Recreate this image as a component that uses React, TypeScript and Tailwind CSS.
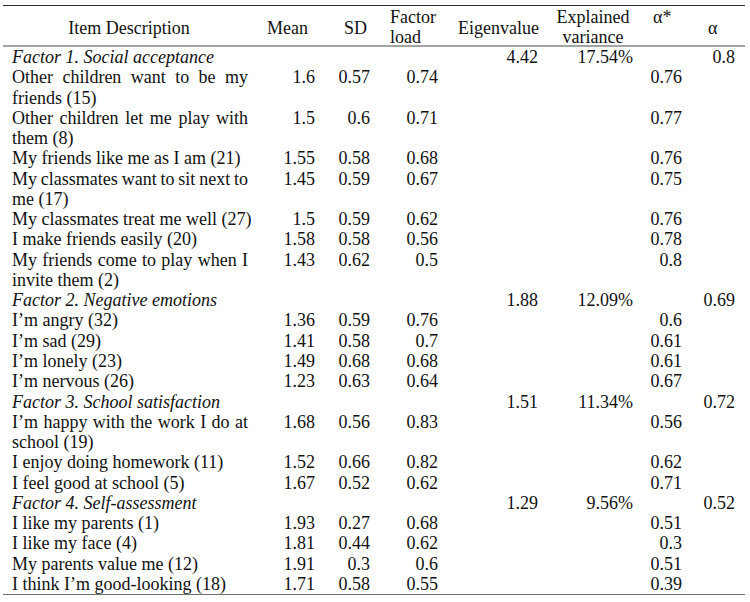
import React from "react";

type Row = {
  t: string[];
  f?: boolean;
  tight?: boolean;
  m?: string;
  sd?: string;
  fl?: string;
  ev?: string;
  vr?: string;
  as?: string;
  a?: string;
};

const rows: Row[] = [
  { t: ["Factor 1. Social acceptance"], f: true, ev: "4.42", vr: "17.54%", a: "0.8" },
  { t: ["Other children want to be my", "friends (15)"], m: "1.6", sd: "0.57", fl: "0.74", as: "0.76" },
  { t: ["Other children let me play with", "them (8)"], m: "1.5", sd: "0.6", fl: "0.71", as: "0.77" },
  { t: ["My friends like me as I am (21)"], m: "1.55", sd: "0.58", fl: "0.68", as: "0.76" },
  { t: ["My classmates want to sit next to", "me (17)"], tight: true, m: "1.45", sd: "0.59", fl: "0.67", as: "0.75" },
  { t: ["My classmates treat me well (27)"], m: "1.5", sd: "0.59", fl: "0.62", as: "0.76" },
  { t: ["I make friends easily (20)"], m: "1.58", sd: "0.58", fl: "0.56", as: "0.78" },
  { t: ["My friends come to play when I", "invite them (2)"], m: "1.43", sd: "0.62", fl: "0.5", as: "0.8" },
  { t: ["Factor 2. Negative emotions"], f: true, ev: "1.88", vr: "12.09%", a: "0.69" },
  { t: ["I\u2019m angry (32)"], m: "1.36", sd: "0.59", fl: "0.76", as: "0.6" },
  { t: ["I\u2019m sad (29)"], m: "1.41", sd: "0.58", fl: "0.7", as: "0.61" },
  { t: ["I\u2019m lonely (23)"], m: "1.49", sd: "0.68", fl: "0.68", as: "0.61" },
  { t: ["I\u2019m nervous (26)"], m: "1.23", sd: "0.63", fl: "0.64", as: "0.67" },
  { t: ["Factor 3. School satisfaction"], f: true, ev: "1.51", vr: "11.34%", a: "0.72" },
  { t: ["I\u2019m happy with the work I do at", "school (19)"], m: "1.68", sd: "0.56", fl: "0.83", as: "0.56" },
  { t: ["I enjoy doing homework (11)"], m: "1.52", sd: "0.66", fl: "0.82", as: "0.62" },
  { t: ["I feel good at school (5)"], m: "1.67", sd: "0.52", fl: "0.62", as: "0.71" },
  { t: ["Factor 4. Self-assessment"], f: true, ev: "1.29", vr: "9.56%", a: "0.52" },
  { t: ["I like my parents (1)"], m: "1.93", sd: "0.27", fl: "0.68", as: "0.51" },
  { t: ["I like my face (4)"], m: "1.81", sd: "0.44", fl: "0.62", as: "0.3" },
  { t: ["My parents value me (12)"], m: "1.91", sd: "0.3", fl: "0.6", as: "0.51" },
  { t: ["I think I\u2019m good-looking (18)"], m: "1.71", sd: "0.58", fl: "0.55", as: "0.39" },
];

const grid =
  "grid grid-cols-[252px_65px_55px_68px_100px_95px_49px_58px]";

export default function App() {
  return (
    <div
      className="w-[750px] h-[602px] bg-white text-[#111] text-[18px] pt-[5px] pl-[3px]"
      style={{ fontFamily: '"Liberation Serif", "Times New Roman", serif' }}
    >
      <div className="w-[742px]">
        {/* header */}
        <div
          className={`${grid} h-[42px] border-t border-t-[#2a2a2a] border-b-2 border-b-[#a3a3a3] leading-[19.5px]`}
        >
          <div className="flex items-center justify-center pt-[4px]">Item Description</div>
          <div className="flex items-center justify-center pt-[4px]">Mean</div>
          <div className="flex items-center justify-end pr-[8px] pt-[4px]">SD</div>
          <div className="pl-[15px] pt-[2px]">
            <div>Factor</div>
            <div>load</div>
          </div>
          <div className="flex items-center pl-[15px] pt-[4px]">Eigenvalue</div>
          <div className="pt-[2px] pl-[5px] text-center">
            <div>Explained</div>
            <div>variance</div>
          </div>
          <div className="pl-[15px] pt-[2px]">α*</div>
          <div className="flex items-center pl-[21px] pt-[4px]">α</div>
        </div>
        {/* body */}
        <div className="border-b border-b-[#6e6e6e] leading-[20.26px]">
          {rows.map((r, i) => (
            <div key={i} className={grid}>
              <div className={`pl-[9px] pr-[7px] ${r.f ? "italic" : ""}`}>
                {r.t.length > 1 ? (
                  <>
                    <div
                      className={`whitespace-nowrap text-justify [text-align-last:justify] ${
                        r.tight ? "[word-spacing:-0.8px]" : ""
                      }`}
                    >
                      {r.t[0]}
                    </div>
                    <div>{r.t[1]}</div>
                  </>
                ) : (
                  <div className="whitespace-nowrap">{r.t[0]}</div>
                )}
              </div>
              <div className="text-right pr-[5px]">{r.m}</div>
              <div className="text-right pr-[5px]">{r.sd}</div>
              <div className="text-right pr-[5px]">{r.fl}</div>
              <div className="text-right pr-[5px]">{r.ev}</div>
              <div className="text-right pr-[5px]">{r.vr}</div>
              <div className="text-right pr-[5px]">{r.as}</div>
              <div className="text-right pr-[10px]">{r.a}</div>
            </div>
          ))}
        </div>
      </div>
    </div>
  );
}
